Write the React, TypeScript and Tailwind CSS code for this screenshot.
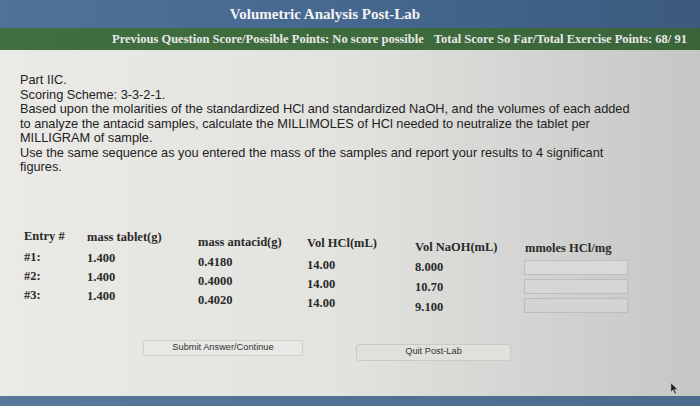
import React from "react";

const serif = { fontFamily: '"Liberation Serif", "Times New Roman", serif' } as const;
const sans = { fontFamily: '"Liberation Sans", Arial, sans-serif' } as const;

type Col = { head: string; vals: string[]; w: string; pt: string; mb: string; gap: string };

const cols: Col[] = [
  { head: "Entry #", vals: ["#1:", "#2:", "#3:"], w: "w-[63px]", pt: "pt-0", mb: "mb-[2px]", gap: "gap-[3px]" },
  { head: "mass tablet(g)", vals: ["1.400", "1.400", "1.400"], w: "w-[111px]", pt: "pt-[1px]", mb: "mb-[2px]", gap: "gap-[3px]" },
  { head: "mass antacid(g)", vals: ["0.4180", "0.4000", "0.4020"], w: "w-[109px]", pt: "pt-[6px]", mb: "mb-[1px]", gap: "gap-[3px]" },
  { head: "Vol HCl(mL)", vals: ["14.00", "14.00", "14.00"], w: "w-[108px]", pt: "pt-[7px]", mb: "mb-[3px]", gap: "gap-[3px]" },
  { head: "Vol NaOH(mL)", vals: ["8.000", "10.70", "9.100"], w: "w-[109px]", pt: "pt-[11px]", mb: "mb-[0px]", gap: "gap-[4px]" },
];

export default function App() {
  return (
    <div className="relative w-[700px] h-[406px] overflow-hidden flex flex-col bg-[#e4e4e1]">
      <div
        className="h-[28px] flex items-center bg-gradient-to-r from-[#4f729b] via-[#46688f] to-[#3b5a7e] text-[15px] font-bold text-[#f3f3f3]"
        style={serif}
      >
        <div className="w-[650px] text-center">Volumetric Analysis Post-Lab</div>
      </div>
      <div
        className="h-[22px] flex items-center pl-[112px] gap-[10px] bg-gradient-to-r from-[#416f3f] to-[#3a653a] text-[12.5px] font-bold text-[#e8e8e8] whitespace-nowrap"
        style={serif}
      >
        <span>Previous Question Score/Possible Points: No score possible</span>
        <span>Total Score So Far/Total Exercise Points: 68/ 91</span>
      </div>
      <div className="flex-1 flex flex-col bg-gradient-to-r from-[#ebeae6] via-[#e2e2df] to-[#c6c6c5]">
        <div
          className="pl-[20px] pt-[23px] w-[630px] text-[12.75px] leading-[14.5px] text-[#222]"
          style={sans}
        >
          <p>Part IIC.</p>
          <p>Scoring Scheme: 3-3-2-1.</p>
          <p>
            Based upon the molarities of the standardized HCl and standardized NaOH, and the volumes of each added
            to analyze the antacid samples, calculate the MILLIMOLES of HCl needed to neutralize the tablet per
            MILLIGRAM of sample.
          </p>
          <p>
            Use the same sequence as you entered the mass of the samples and report your results to 4 significant
            figures.
          </p>
        </div>
        <div className="flex pl-[24px] pt-[53px] text-[12.5px] font-bold text-[#2a2a2a]" style={serif}>
          {cols.map((c) => (
            <div key={c.head} className={`flex flex-col ${c.w} ${c.pt} ${c.gap} leading-[16px]`}>
              <div className={c.mb}>{c.head}</div>
              {c.vals.map((v, i) => (
                <div key={i}>{v}</div>
              ))}
            </div>
          ))}
          <div className="flex flex-col pt-[12px] w-[104px]">
            <div className="leading-[16px] pl-[1px]">mmoles HCl/mg</div>
            <div className="flex flex-col gap-[4px] mt-[4px]">
              <div className="h-[15px] border border-[#bdbdbb] bg-[#d9d9d7]" />
              <div className="h-[15px] border border-[#bdbdbb] bg-[#d6d6d4]" />
              <div className="h-[15px] border border-[#bdbdbb] bg-[#d4d4d2]" />
            </div>
          </div>
        </div>
        <div className="flex items-start pl-[143px] pt-[25px] gap-[53px] text-[9.25px] text-[#333]" style={sans}>
          <div className="w-[160px] h-[16px] flex items-center justify-center rounded-[3px] border border-[#cfcfcc] bg-[#e8e8e5]">
            Submit Answer/Continue
          </div>
          <div className="mt-[4px] w-[155px] h-[17px] flex items-center justify-center rounded-[3px] border border-[#c9c9c6] bg-[#e0e0dd]">
            Quit Post-Lab
          </div>
        </div>
      </div>
      <div className="h-[10px] bg-gradient-to-r from-[#58789c] to-[#4a6a8e]" />
      <svg className="absolute left-[670px] top-[382px]" width="9" height="13" viewBox="0 0 10 14">
        <path d="M1 1 L1 11 L3.5 8.5 L5.5 13 L7 12.3 L5 8 L8.5 8 Z" fill="#1a1a1a" stroke="#d8d8d8" strokeWidth="0.5" />
      </svg>
    </div>
  );
}
